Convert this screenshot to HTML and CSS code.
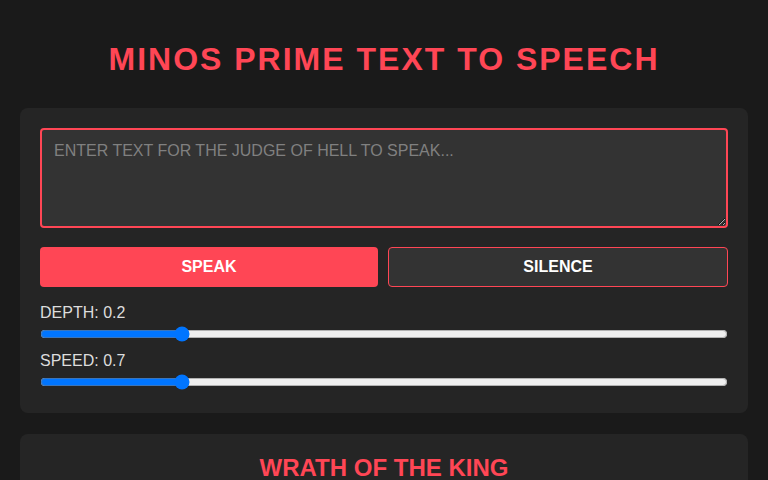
FILE: index.html
```html
<!DOCTYPE html>
<html lang="en">
	<head>
		<meta charset="UTF-8" />
		<meta name="viewport" content="width=device-width, initial-scale=1.0" />
		<title>Minos Prime TTS</title>
		<link rel="stylesheet" href="styles.css">
	</head>
	<body>
		<h1 class="title">Minos Prime Text to Speech</h1>

		<div class="panel">
			<textarea id="text" class="text-input" placeholder="Enter text for the judge of hell to speak..."></textarea>
			<div class="buttons">
				<button id="speak" class="btn btn-speak">Speak</button>
				<button id="silence" class="btn btn-silence">Silence</button>
			</div>
			<div class="control">
				<label for="depth">Depth: <span id="depthValue">0.2</span></label>
				<input type="range" id="depth" min="0" max="1" step="0.1" value="0.2">
			</div>
			<div class="control">
				<label for="speed">Speed: <span id="speedValue">0.7</span></label>
				<input type="range" id="speed" min="0.5" max="1.5" step="0.1" value="0.7">
			</div>
		</div>

		<div class="panel quotes">
			<h2 class="quotes-title">Wrath of the King</h2>
		</div>
	</body>
</html>
```

FILE: styles.css
```css
body {
	margin: 0;
	padding: 20px;
	background-color: #1a1a1a;
	color: #ddd;
	font-family: "Liberation Sans", Arial, sans-serif;
}

.title {
	margin: 21px 0 30px;
	text-align: center;
	font-size: 32px;
	letter-spacing: 2px;
	text-transform: uppercase;
	color: #ff4655;
}

.panel {
	background-color: #252525;
	border-radius: 8px;
	padding: 20px 20px 21px;
	margin-bottom: 21px;
}

.text-input {
	display: block;
	width: 100%;
	height: 100px;
	box-sizing: border-box;
	margin: 0 0 19px;
	padding: 12px;
	background-color: #333;
	color: #eee;
	border: 2px solid #ff4655;
	border-radius: 4px;
	font-family: "Liberation Sans", Arial, sans-serif;
	font-size: 16px;
	text-transform: uppercase;
	outline: none;
}

.text-input::placeholder {
	color: #808080;
}

.buttons {
	display: flex;
	gap: 10px;
	margin-bottom: 17px;
}

.btn {
	flex: 1;
	height: 40px;
	border-radius: 4px;
	font-family: "Liberation Sans", Arial, sans-serif;
	font-size: 16px;
	font-weight: bold;
	text-transform: uppercase;
	color: #fff;
	cursor: pointer;
}

.btn-speak {
	background-color: #ff4655;
	border: none;
}

.btn-silence {
	background-color: #333;
	border: 1px solid #ff4655;
}

.btn:hover {
	opacity: 0.8;
}

.control {
	margin-bottom: 10px;
}

.control:last-child {
	margin-bottom: 0;
}

.control label {
	display: block;
	margin-bottom: 4px;
	font-size: 16px;
	text-transform: uppercase;
	color: #ddd;
}

.control input[type=range] {
	display: block;
	width: 100%;
	margin: 2px 0;
}

.quotes-title {
	margin: 0;
	text-align: center;
	font-size: 24px;
	text-transform: uppercase;
	color: #ff4655;
}
```
